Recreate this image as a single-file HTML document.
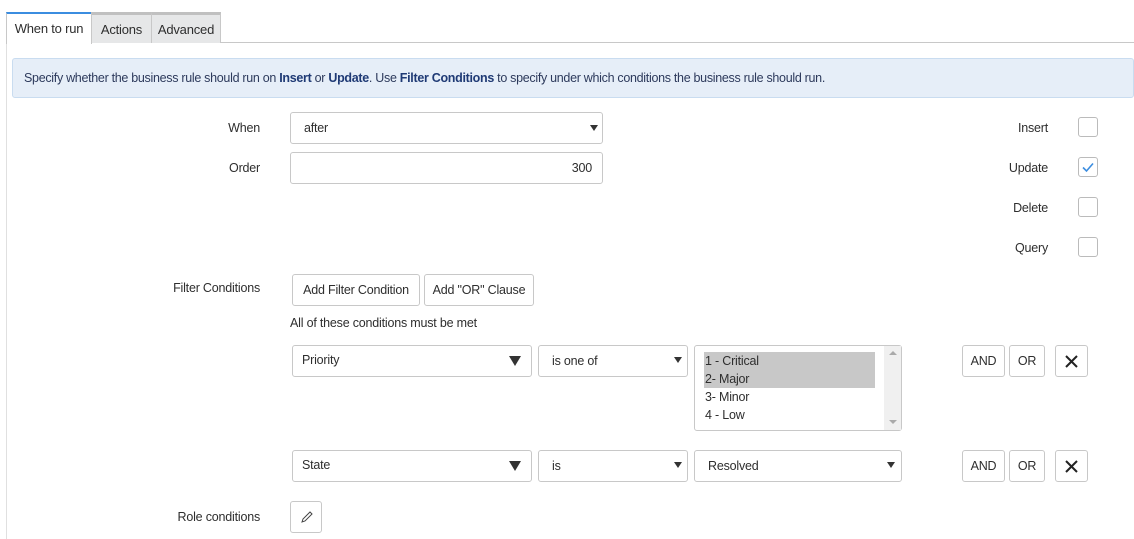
<!DOCTYPE html>
<html><head><meta charset="utf-8"><style>
*{box-sizing:border-box;margin:0;padding:0}
body{width:1134px;height:539px;background:#fff;font-family:"Liberation Sans",Arial,sans-serif;font-size:12.5px;color:#2e2e2e;position:relative;overflow:hidden;letter-spacing:-0.2px}
.a{position:absolute}
.tab{position:absolute;top:12px;height:31px;background:#e6e7e8;border:1px solid #c8c8c8;border-bottom:none;text-align:center;line-height:30px;font-size:13px}
.box{position:absolute;border:1px solid #c8c8c8;border-radius:3px;background:#fff}
.lbl{position:absolute;text-align:right;width:200px}
.cb{position:absolute;left:1078px;width:20px;height:20px;border:1px solid #bbb;border-radius:3px;background:#fff}
.btn{position:absolute;border:1px solid #c8c8c8;border-radius:3px;background:#fff;text-align:center;font-size:12.5px}
.tri{position:absolute;width:0;height:0;border-left:4px solid transparent;border-right:4px solid transparent;border-top:6px solid #333}
.tri2{position:absolute;width:0;height:0;border-left:6px solid transparent;border-right:6px solid transparent;border-top:10px solid #333}
</style></head><body>
<div class="a" style="left:6px;top:42px;width:1128px;height:1px;background:#c8c8c8"></div>
<div class="a" style="left:6px;top:42px;width:1px;height:497px;background:#e0e0e0"></div>
<div class="tab" style="left:6px;width:86px;background:#fff;border-top:2px solid #3b8de0;height:32px;line-height:30px">When to run</div>
<div class="tab" style="left:91px;width:61px;border-top:3px solid #c0c0c0;line-height:29px">Actions</div>
<div class="tab" style="left:151px;width:70px;border-top:3px solid #c0c0c0;line-height:29px">Advanced</div>
<div class="a" style="left:12px;top:58px;width:1122px;height:40px;background:#e6eef8;border:1px solid #c9dcf0;border-radius:3px;line-height:38px;padding-left:11px;color:#2d3a5c;letter-spacing:-0.3px">Specify whether the business rule should run on <b style="color:#1f3a75">Insert</b> or <b style="color:#1f3a75">Update</b>. Use <b style="color:#1f3a75">Filter Conditions</b> to specify under which conditions the business rule should run.</div>

<div class="lbl" style="left:60px;top:121px">When</div>
<div class="box" style="left:290px;top:112px;width:313px;height:32px;line-height:31px;padding-left:13px">after</div>
<div class="tri" style="left:590px;top:125px"></div>
<div class="lbl" style="left:60px;top:161px">Order</div>
<div class="box" style="left:290px;top:152px;width:313px;height:32px;line-height:31px;text-align:right;padding-right:10px">300</div>

<div class="lbl" style="left:848px;top:121px">Insert</div>
<div class="lbl" style="left:848px;top:161px">Update</div>
<div class="lbl" style="left:848px;top:201px">Delete</div>
<div class="lbl" style="left:848px;top:241px">Query</div>
<div class="cb" style="top:117px"></div>
<div class="cb" style="top:157px"><svg width="18" height="18" style="position:absolute;left:0;top:0"><path d="M4 9.5l3.5 3.5L14 5.5" stroke="#3b8de0" stroke-width="1.6" fill="none"/></svg></div>
<div class="cb" style="top:197px"></div>
<div class="cb" style="top:237px"></div>

<div class="lbl" style="left:60px;top:281px">Filter Conditions</div>
<div class="btn" style="left:292px;top:274px;width:128px;height:32px;line-height:30px">Add Filter Condition</div>
<div class="btn" style="left:424px;top:274px;width:110px;height:32px;line-height:30px">Add "OR" Clause</div>
<div class="a" style="left:290px;top:316px">All of these conditions must be met</div>

<div class="box" style="left:292px;top:345px;width:240px;height:32px;line-height:29px;padding-left:9px">Priority</div>
<div class="tri2" style="left:509px;top:356px"></div>
<div class="box" style="left:538px;top:345px;width:150px;height:32px;line-height:31px;padding-left:13px">is one of</div>
<div class="tri" style="left:674px;top:357px"></div>
<div class="box" style="left:694px;top:345px;width:208px;height:86px"></div>
<div class="a" style="left:884px;top:346px;width:17px;height:84px;background:#f0f0f0"></div>
<div class="a" style="left:889px;top:351px;border-left:4px solid transparent;border-right:4px solid transparent;border-bottom:4px solid #aaa"></div>
<div class="a" style="left:889px;top:420px;border-left:4px solid transparent;border-right:4px solid transparent;border-top:4px solid #aaa"></div>
<div class="a" style="left:704px;top:352px;width:171px;height:36px;background:#c8c8c8"></div>
<div class="a" style="left:705px;top:352px;line-height:18px">1 - Critical<br>2- Major<br>3- Minor<br>4 - Low</div>
<div class="btn" style="left:962px;top:345px;width:43px;height:32px;line-height:30px">AND</div>
<div class="btn" style="left:1009px;top:345px;width:36px;height:32px;line-height:30px">OR</div>
<div class="btn" style="left:1055px;top:345px;width:33px;height:32px"><svg width="31" height="30"><path d="M10 10l11 11M21 10L10 21" stroke="#222" stroke-width="2"/></svg></div>

<div class="box" style="left:292px;top:450px;width:240px;height:32px;line-height:29px;padding-left:9px">State</div>
<div class="tri2" style="left:509px;top:461px"></div>
<div class="box" style="left:538px;top:450px;width:150px;height:32px;line-height:31px;padding-left:13px">is</div>
<div class="tri" style="left:674px;top:462px"></div>
<div class="box" style="left:694px;top:450px;width:208px;height:32px;line-height:31px;padding-left:13px">Resolved</div>
<div class="tri" style="left:887px;top:462px"></div>
<div class="btn" style="left:962px;top:450px;width:43px;height:32px;line-height:30px">AND</div>
<div class="btn" style="left:1009px;top:450px;width:36px;height:32px;line-height:30px">OR</div>
<div class="btn" style="left:1055px;top:450px;width:33px;height:32px"><svg width="31" height="30"><path d="M10 10l11 11M21 10L10 21" stroke="#222" stroke-width="2"/></svg></div>

<div class="lbl" style="left:60px;top:510px">Role conditions</div>
<div class="btn" style="left:290px;top:501px;width:32px;height:32px"><svg width="30" height="30"><path d="M11 20l1-3 7-7 2 2-7 7z" stroke="#444" stroke-width="1" fill="none"/></svg></div>
</body></html>
